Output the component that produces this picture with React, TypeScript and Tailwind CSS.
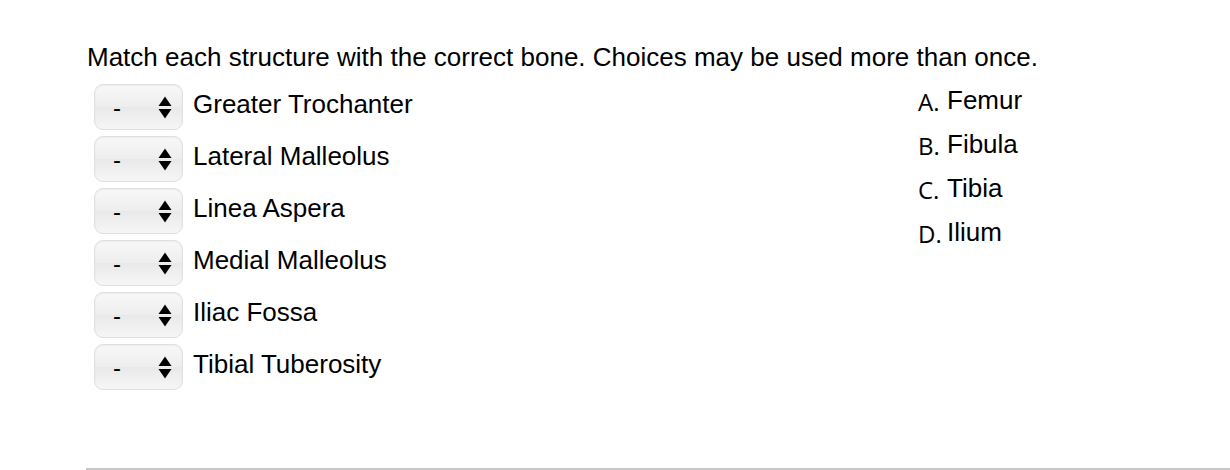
import React from 'react';

const structures = [
  'Greater Trochanter',
  'Lateral Malleolus',
  'Linea Aspera',
  'Medial Malleolus',
  'Iliac Fossa',
  'Tibial Tuberosity',
];

const choices = [
  { letter: 'A.', name: 'Femur' },
  { letter: 'B.', name: 'Fibula' },
  { letter: 'C.', name: 'Tibia' },
  { letter: 'D.', name: 'Ilium' },
];

const SelectBox: React.FC = () => (
  <div className="relative shrink-0 w-[89px] h-[46px] rounded-[9px] border border-[#e0e0e0] bg-[linear-gradient(to_bottom,#f8f8f8_0%,#ededed_50%,#e9e9e9_51%,#f6f6f6_100%)] shadow-[inset_0_1px_2px_rgba(0,0,0,0.05)]">
    <select className="appearance-none w-full h-full bg-transparent pl-[18px] pt-[1px] text-[24px] text-black outline-none font-['Liberation_Sans',Arial,sans-serif]">
      <option>-</option>
      <option>A</option>
      <option>B</option>
      <option>C</option>
      <option>D</option>
    </select>
    <svg className="absolute left-[63px] top-[11px] pointer-events-none" width="14" height="23" viewBox="0 0 14 23">
      <path d="M7 0.5 L13.5 10 L0.5 10 Z" fill="#000" />
      <path d="M7 22.5 L13.5 13 L0.5 13 Z" fill="#000" />
    </svg>
  </div>
);

export default function App() {
  return (
    <div className="w-[1230px] h-[470px] bg-white font-['Liberation_Sans',Arial,sans-serif] text-black flex flex-col">
      <div className="pl-[87px] pt-[40px] flex-1">
        <p className="text-[26px] leading-[34px] whitespace-nowrap">
          Match each structure with the correct bone. Choices may be used more than once.
        </p>
        <div className="flex mt-[10px]">
          <div className="w-[831px] shrink-0 flex flex-col gap-[6px] pl-[7px]">
            {structures.map((s) => (
              <div key={s} className="flex items-center gap-[10px]">
                <SelectBox />
                <span className="text-[26px] leading-[30px] whitespace-nowrap -translate-y-[3px]">{s}</span>
              </div>
            ))}
          </div>
          <div className="flex flex-col gap-[14px] mt-[1px]">
            {choices.map((c) => (
              <div key={c.letter} className="flex items-baseline h-[30px] leading-[30px] whitespace-nowrap">
                <span className="font-['Open_Sans',sans-serif] text-[24px] w-[29px] translate-y-[2px]">{c.letter}</span>
                <span className="text-[26px]">{c.name}</span>
              </div>
            ))}
          </div>
        </div>
      </div>
      <div className="ml-[86px] h-[2px] bg-[#c8c8c8]" />
    </div>
  );
}
